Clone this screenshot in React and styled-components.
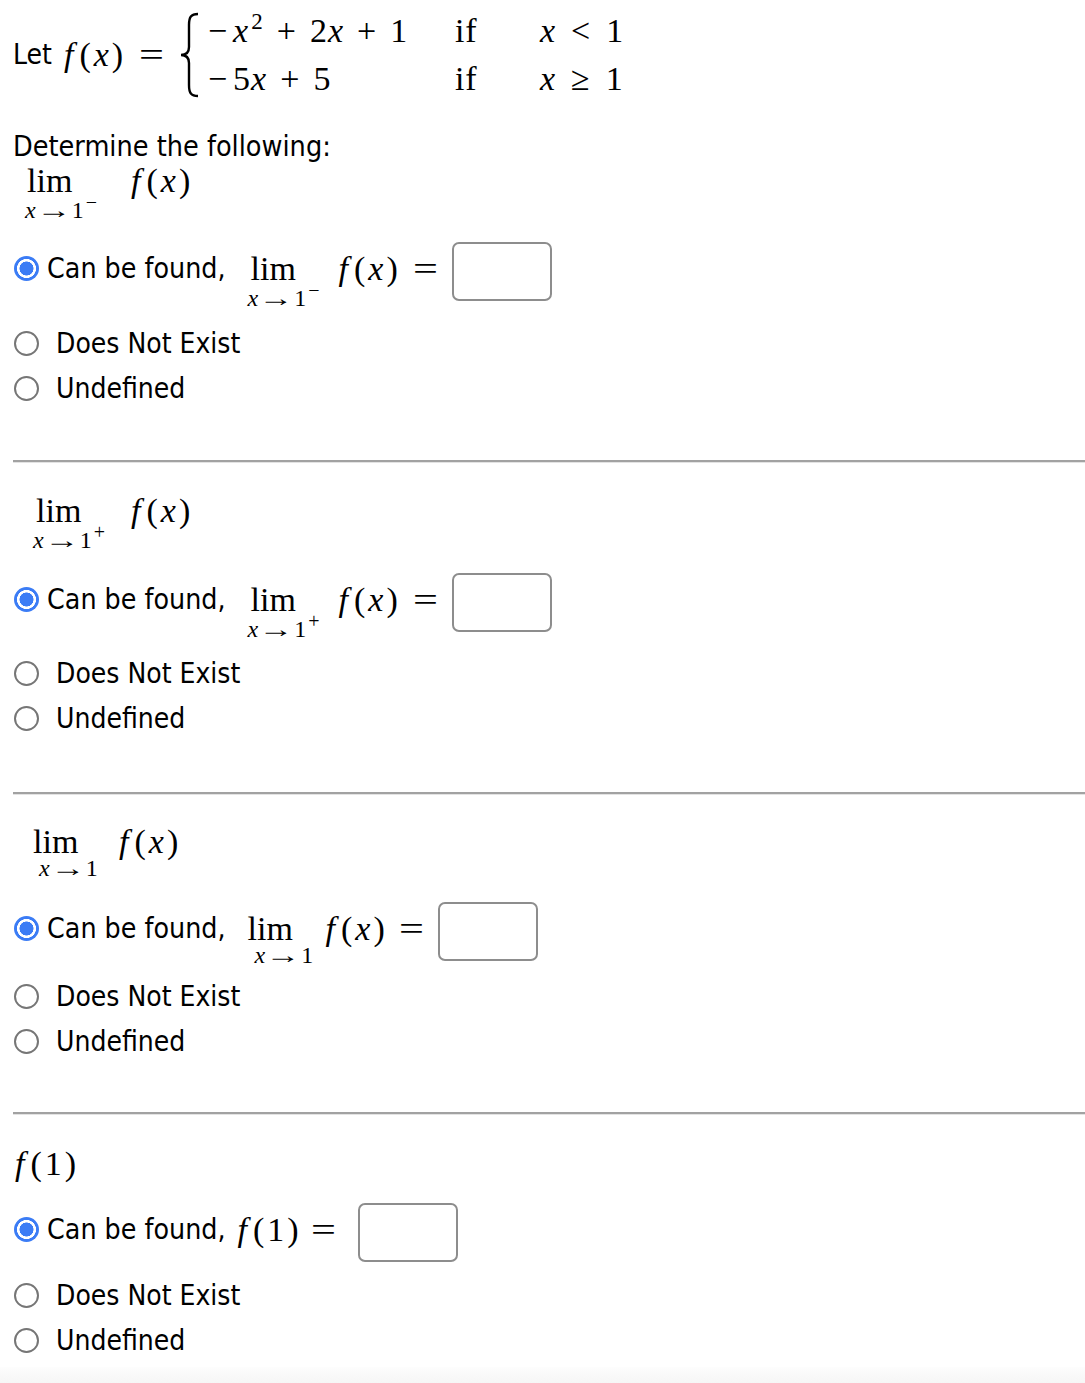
import styled, { createGlobalStyle } from "styled-components";

const GlobalStyle = createGlobalStyle`
  html, body {
    margin: 0;
    padding: 0;
    background: #fff;
  }
  body {
    font-family: "DejaVu Sans Condensed", "DejaVu Sans", sans-serif;
    color: #000;
  }
`;

const Page = styled.div`
  width: 1085px;
  min-height: 1383px;
  display: flex;
  flex-direction: column;
`;

const Content = styled.div`
  flex: 1;
  padding-left: 13px;
  display: flex;
  flex-direction: column;
  align-items: flex-start;
`;

const Footer = styled.div`
  height: 16px;
  background: linear-gradient(#fdfdfd, #f6f6f6);
`;

/* ---------- math bits ---------- */
const Math = styled.span`
  font-family: "Liberation Serif", "Times New Roman", serif;
  font-size: 34px;
  line-height: 34px;
  white-space: nowrap;
`;

const Var = styled.i`
  font-style: italic;
  margin-right: ${(p) => p.$tail || 0}px;
`;

const Op = styled.span`
  margin: 0 ${(p) => p.$space ?? 13}px 0 ${(p) => p.$left ?? p.$space ?? 13}px;
`;

const Sup = styled.sup`
  font-size: ${(p) => p.$size || 23}px;
  line-height: 0;
  vertical-align: 0;
  position: relative;
  top: ${(p) => p.$raise || -13}px;
  margin-left: ${(p) => p.$left ?? 2}px;
`;

const MathFn = styled(Math)`
  display: inline-block;
  width: ${(p) => p.$w}px;
  letter-spacing: 3px;
  margin-top: ${(p) => p.$mt || 0}px;
`;

const Fx = ({ arg = "x", w = 62, mt }) => (
  <MathFn $w={w} $mt={mt}>
    <Var $tail={3}>f</Var>(
    {arg === "x" ? <Var>x</Var> : "1"})
  </MathFn>
);

const LimStack = styled.span`
  display: inline-flex;
  flex-direction: column;
  align-items: flex-start;
  width: ${(p) => p.$w}px;
  margin-top: ${(p) => p.$mt || 0}px;
  flex-shrink: 0;
`;

const LimWord = styled(Math)`
  padding-left: ${(p) => p.$indent || 0}px;
`;

const LimSub = styled.span`
  font-family: "Liberation Serif", "Times New Roman", serif;
  font-size: 24px;
  line-height: 24px;
  height: 24px;
  white-space: nowrap;
  padding-left: ${(p) => p.$indent || 0}px;
  margin-top: ${(p) => (p.$plain ? -3 : 0)}px;
`;

const Arrow = styled.span`
  display: inline-block;
  transform: scaleX(1.45);
  margin: 0 6px 0 6px;
`;

const Limit = ({ side, w, limIndent = 0, subIndent = 0, mt }) => (
  <LimStack $w={w} $mt={mt}>
    <LimWord $indent={limIndent}>lim</LimWord>
    <LimSub $indent={subIndent} $plain={!side}>
      <Var>x</Var>
      <Arrow>→</Arrow>1
      {side && (
        <Sup $size={20} $raise={-9}>
          {side}
        </Sup>
      )}
    </LimSub>
  </LimStack>
);

const Brace = () => (
  <svg width="22" height="86" viewBox="0 0 22 86">
    <path
      d="M20 2 C13 2 11 5 11 13 L11 35 C11 40 8 43 3 43 C8 43 11 46 11 51 L11 73 C11 81 13 84 20 84"
      fill="none"
      stroke="#000"
      strokeWidth="2.4"
    />
  </svg>
);

/* ---------- header ---------- */
const Header = styled.div`
  height: 110px;
  display: flex;
  align-items: center;
`;

const Prose = styled.span`
  font-size: 28px;
  line-height: 34px;
  margin-right: ${(p) => p.$gap || 0}px;
`;

const Equals = styled(Math)`
  display: inline-block;
  width: 25px;
  text-align: center;
  margin-top: ${(p) => p.$mt || 0}px;
  margin-left: ${(p) => p.$before ?? 13}px;
  margin-right: ${(p) => p.$after ?? 14}px;
  transform: scaleX(1.3);
`;

const BraceBox = styled.span`
  display: flex;
  margin: 0 8px 0 14px;
`;

const Cases = styled.div`
  display: grid;
  grid-template-columns: 247px 85px auto;
  grid-auto-rows: 48px;
  align-items: center;
`;

const Cell = styled(Math)`
  letter-spacing: 1px;
`;

const Intro = styled.div`
  font-size: 28.5px;
  line-height: 34px;
  margin-top: 20px;
`;

/* ---------- question blocks ---------- */
const Prompt = styled.div`
  display: flex;
  align-items: flex-start;
  margin-top: ${(p) => p.$mt || 0}px;
  padding-left: ${(p) => p.$indent || 0}px;
`;

const AnswerRow = styled.div`
  display: flex;
  align-items: flex-start;
  margin-top: ${(p) => p.$mt}px;
`;

const Radio = styled.input.attrs({ type: "radio" })`
  appearance: none;
  -webkit-appearance: none;
  box-sizing: border-box;
  width: 25px;
  height: 25px;
  flex-shrink: 0;
  margin: ${(p) => p.$top || 0}px ${(p) => p.$gap}px 0 1px;
  border-radius: 50%;
  border: 2px solid #767676;
  background: #fff;

  &:checked {
    border: none;
    background: radial-gradient(
      circle closest-side,
      #3b7cf5 0 54%,
      #fff 58% 74%,
      #3b7cf5 78%
    );
  }
`;

const AnswerLabel = styled.span`
  font-size: 28.3px;
  line-height: 34px;
  margin-top: 10px;
  margin-right: ${(p) => p.$gap}px;
  white-space: nowrap;
`;

const AnswerBox = styled.input.attrs({ type: "text" })`
  box-sizing: border-box;
  width: 100px;
  height: 59px;
  border: 2px solid #8d8d8d;
  border-radius: 7px;
  background: #fff;
  flex-shrink: 0;
  outline: none;
  margin: 0;
`;

const OptionRow = styled.label`
  display: flex;
  align-items: center;
  height: 45px;
  margin-top: ${(p) => p.$mt || 0}px;
`;

const OptionText = styled.span`
  font-size: 28px;
  line-height: 34px;
`;

const Divider = styled.hr`
  align-self: stretch;
  height: 0;
  margin: ${(p) => p.$mt}px 0 0 0;
  border: none;
  border-top: 2px solid #a2a2a2;
  border-bottom: 1px solid #e3e3e3;
`;

const Choices = ({ name, math, labelGap = 22, eqAfter, rowTop, optTop }) => (
  <>
    <AnswerRow $mt={rowTop}>
      <Radio name={name} defaultChecked $top={14} $gap={8} />
      <AnswerLabel $gap={labelGap}>Can be found,</AnswerLabel>
      {math}
      <Equals $mt={10} $after={eqAfter}>
        =
      </Equals>
      <AnswerBox />
    </AnswerRow>
    <OptionRow $mt={optTop}>
      <Radio name={name} $gap={17} />
      <OptionText>Does Not Exist</OptionText>
    </OptionRow>
    <OptionRow>
      <Radio name={name} $gap={17} />
      <OptionText>Undefined</OptionText>
    </OptionRow>
  </>
);

export default function App() {
  return (
    <Page>
      <GlobalStyle />
      <Content>
        <Header>
          <Prose $gap={12}>Let</Prose>
          <Fx />
          <Equals $before={13} $after={0}>
            =
          </Equals>
          <BraceBox>
            <Brace />
          </BraceBox>
          <Cases>
            <Cell>
              <Op $left={0} $space={5}>−</Op>
              <Var>x</Var>
              <Sup>2</Sup>
              <Op>+</Op>2<Var>x</Var>
              <Op>+</Op>1
            </Cell>
            <Cell>if</Cell>
            <Cell>
              <Var>x</Var>
              <Op $space={15}>&lt;</Op>1
            </Cell>
            <Cell>
              <Op $left={0} $space={5}>−</Op>5<Var>x</Var>
              <Op>+</Op>5
            </Cell>
            <Cell>if</Cell>
            <Cell>
              <Var>x</Var>
              <Op $space={15}>≥</Op>1
            </Cell>
          </Cases>
        </Header>

        <Intro>Determine the following:</Intro>

        {/* left-hand limit */}
        <Prompt $indent={12}>
          <Limit side="−" w={106} limIndent={2} />
          <Fx />
        </Prompt>
        <Choices
          name="q1"
          rowTop={20}
          optTop={11}
          math={
            <>
              <Limit side="−" w={91} limIndent={3} mt={10} />
              <Fx w={61} mt={10} />
            </>
          }
        />
        <Divider $mt={49} />

        {/* right-hand limit */}
        <Prompt $mt={31} $indent={20}>
          <Limit side="+" w={98} limIndent={3} />
          <Fx />
        </Prompt>
        <Choices
          name="q2"
          rowTop={21}
          optTop={10}
          math={
            <>
              <Limit side="+" w={91} limIndent={3} mt={10} />
              <Fx w={61} mt={10} />
            </>
          }
        />
        <Divider $mt={51} />

        {/* two-sided limit */}
        <Prompt $mt={30} $indent={20}>
          <Limit w={86} subIndent={6} />
          <Fx />
        </Prompt>
        <Choices
          name="q3"
          rowTop={22}
          optTop={7}
          math={
            <>
              <Limit w={78} subIndent={7} mt={10} />
              <Fx w={60} mt={10} />
            </>
          }
        />
        <Divider $mt={48} />

        {/* value at 1 */}
        <Prompt $mt={32} $indent={2}>
          <Fx arg="1" w={58} />
        </Prompt>
        <Choices
          name="q4"
          rowTop={22}
          optTop={11}
          labelGap={12}
          eqAfter={22}
          math={<Fx arg="1" w={60} mt={10} />}
        />
      </Content>
      <Footer />
    </Page>
  );
}
